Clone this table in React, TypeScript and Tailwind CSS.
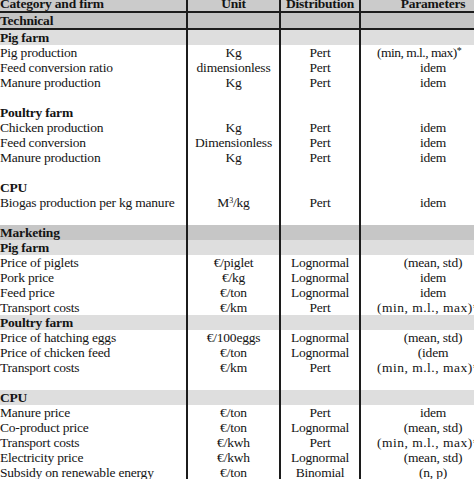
import React from "react";

type Kind = "head" | "sec" | "sub" | "subplain" | "data" | "blank";
type Row = {
  k: Kind;
  a?: React.ReactNode;
  b?: React.ReactNode;
  c?: string;
  d?: string;
};

const MINMAX = "MINMAX";
const MINMAX_TOP = "MINMAX_TOP";

const rows: Row[] = [
  { k: "head", a: "Category and firm", b: "Unit", c: "Distribution", d: "Parameters" },
  { k: "sec", a: "Technical" },
  { k: "sub", a: "Pig farm" },
  { k: "data", a: "Pig production", b: "Kg", c: "Pert", d: MINMAX_TOP },
  { k: "data", a: "Feed conversion ratio", b: "dimensionless", c: "Pert", d: "idem" },
  { k: "data", a: "Manure production", b: "Kg", c: "Pert", d: "idem" },
  { k: "blank" },
  { k: "subplain", a: "Poultry farm" },
  { k: "data", a: "Chicken production", b: "Kg", c: "Pert", d: "idem" },
  { k: "data", a: "Feed conversion", b: "Dimensionless", c: "Pert", d: "idem" },
  { k: "data", a: "Manure production", b: "Kg", c: "Pert", d: "idem" },
  { k: "blank" },
  { k: "subplain", a: "CPU" },
  {
    k: "data",
    a: "Biogas production per kg manure",
    b: (
      <span>
        M<span className="relative -top-[4px] text-[8px] leading-none">3</span>/kg
      </span>
    ),
    c: "Pert",
    d: "idem",
  },
  { k: "blank" },
  { k: "sec", a: "Marketing" },
  { k: "sub", a: "Pig farm" },
  { k: "data", a: "Price of piglets", b: "€/piglet", c: "Lognormal", d: "(mean, std)" },
  { k: "data", a: "Pork price", b: "€/kg", c: "Lognormal", d: "idem" },
  { k: "data", a: "Feed price", b: "€/ton", c: "Lognormal", d: "idem" },
  { k: "data", a: "Transport costs", b: "€/km", c: "Pert", d: MINMAX },
  { k: "sub", a: "Poultry farm" },
  { k: "data", a: "Price of hatching eggs", b: "€/100eggs", c: "Lognormal", d: "(mean, std)" },
  { k: "data", a: "Price of chicken feed", b: "€/ton", c: "Lognormal", d: "(idem" },
  { k: "data", a: "Transport costs", b: "€/km", c: "Pert", d: MINMAX },
  { k: "blank" },
  { k: "sub", a: "CPU" },
  { k: "data", a: "Manure price", b: "€/ton", c: "Pert", d: "idem" },
  { k: "data", a: "Co-product price", b: "€/ton", c: "Lognormal", d: "(mean, std)" },
  { k: "data", a: "Transport costs", b: "€/kwh", c: "Pert", d: MINMAX },
  { k: "data", a: "Electricity price", b: "€/kwh", c: "Lognormal", d: "(mean, std)" },
  { k: "data", a: "Subsidy on renewable energy", b: "€/ton", c: "Binomial", d: "(n, p)" },
];

function rowClass(k: Kind, first: boolean): string {
  if (k === "head") return "bg-[#cbcbcb] h-[17px] border-b-2 border-[#1c1c1c] font-bold";
  if (k === "sec" && first) return "bg-[#c4c4c4] h-[17px] border-b-2 border-[#1c1c1c] font-bold";
  if (k === "sec") return "bg-[#c6c6c6] h-[15px] font-bold";
  if (k === "sub") return "bg-[#dedede] h-[15px] font-bold";
  if (k === "subplain") return "bg-white h-[15px] font-bold";
  return "bg-white h-[15px]";
}

function Param({ d }: { d?: string }) {
  if (d === MINMAX_TOP) {
    return (
      <div className="border-l-2 border-[#1c1c1c] whitespace-nowrap pl-[16px] tracking-[-0.5px]">
        (min, m.l., max)<span className="relative -top-[3px] text-[10px] leading-none">*</span>
      </div>
    );
  }
  if (d === MINMAX) {
    return (
      <div className="border-l-2 border-[#1c1c1c] whitespace-nowrap pl-[16px] tracking-[0.5px]">
        (min, m.l., max)*
      </div>
    );
  }
  return <div className="border-l-2 border-[#1c1c1c] text-center whitespace-nowrap">{d}</div>;
}

export default function App() {
  return (
    <div className="w-[474px] h-[479px] overflow-hidden bg-white">
      <div
        className="w-[505px] mt-[-4px] text-[13.5px] leading-[15px] tracking-[-0.2px] text-[#141414]"
        style={{ fontFamily: '"Liberation Serif", "Times New Roman", serif' }}
      >
        {rows.map((r, i) => (
          <div
            key={i}
            className={`grid grid-cols-[186px_93px_80px_146px] ${rowClass(r.k, i === 1)}`}
          >
            <div className="whitespace-nowrap pl-0">{r.a}</div>
            <div className="border-l-2 border-[#1c1c1c] text-center whitespace-nowrap">{r.b}</div>
            <div className="border-l-2 border-[#1c1c1c] text-center whitespace-nowrap">{r.c}</div>
            <Param d={r.d} />
          </div>
        ))}
      </div>
    </div>
  );
}
